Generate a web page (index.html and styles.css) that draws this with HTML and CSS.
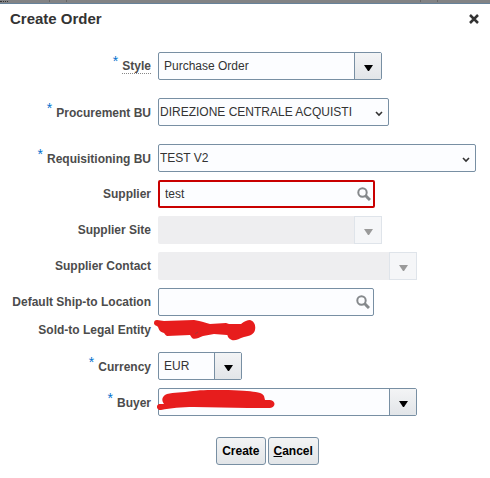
FILE: index.html
```html
<!DOCTYPE html>
<html lang="en">
<head>
<meta charset="utf-8">
<title>Create Order</title>
<link rel="stylesheet" href="styles.css">
</head>
<body>
<div class="backdrop"><span class="mark"></span><span class="tick"></span><span class="tick"></span><span class="spacer"></span><span class="tick"></span><span class="tick"></span></div>
<main class="dialog" role="dialog" aria-labelledby="title">
  <header class="header">
    <h1 id="title">Create Order</h1>
    <button class="close" type="button" aria-label="Close"><svg width="10" height="10" viewBox="0 0 10 10"><path d="M1 1L9 9M9 1L1 9"/></svg></button>
  </header>
  <form class="form">
    <div class="row row-spaced">
      <label class="label" for="style"><span class="required">*</span><span class="hint">Style</span></label>
      <div class="field medium"><input id="style" type="text" value="Purchase Order"><button class="arrow" type="button" aria-label="Open style list"><svg width="9" height="6" viewBox="0 0 9 6"><path d="M0 0H9L5 6H4Z"/></svg></button></div>
    </div>
    <div class="row row-spaced">
      <label class="label" for="procurement"><span class="required">*</span>Procurement BU</label>
      <div class="field procurement"><select id="procurement"><option>DIREZIONE CENTRALE ACQUISTI</option></select><svg class="chevron" width="8" height="6" viewBox="0 0 8 6"><path d="M1 1L4 4L7 1"/></svg></div>
    </div>
    <div class="row">
      <label class="label" for="requisitioning"><span class="required">*</span>Requisitioning BU</label>
      <div class="field wide"><select id="requisitioning"><option>TEST V2</option></select><svg class="chevron" width="8" height="6" viewBox="0 0 8 6"><path d="M1 1L4 4L7 1"/></svg></div>
    </div>
    <div class="row">
      <label class="label" for="supplier">Supplier</label>
      <div class="field search invalid"><input id="supplier" type="text" value="test"><button class="lens" type="button" aria-label="Search supplier"><svg width="14" height="14" viewBox="0 0 14 14"><circle cx="5.5" cy="5.5" r="4.2"/><path d="M8.5 8.5L13 13"/></svg></button></div>
    </div>
    <div class="row">
      <label class="label" for="site">Supplier Site</label>
      <div class="field medium disabled"><input id="site" type="text" disabled><button class="arrow" type="button" disabled aria-label="Open site list"><svg width="9" height="6" viewBox="0 0 9 6"><path d="M0 0H9L5 6H4Z"/></svg></button></div>
    </div>
    <div class="row">
      <label class="label" for="contact">Supplier Contact</label>
      <div class="field large disabled"><input id="contact" type="text" disabled><button class="arrow" type="button" disabled aria-label="Open contact list"><svg width="9" height="6" viewBox="0 0 9 6"><path d="M0 0H9L5 6H4Z"/></svg></button></div>
    </div>
    <div class="row">
      <label class="label" for="location">Default Ship-to Location</label>
      <div class="field search"><input id="location" type="text"><button class="lens" type="button" aria-label="Search location"><svg width="14" height="14" viewBox="0 0 14 14"><circle cx="5.5" cy="5.5" r="4.2"/><path d="M8.5 8.5L13 13"/></svg></button></div>
    </div>
    <div class="row row-text">
      <span class="label">Sold-to Legal Entity</span>
      <div class="value"><svg class="scribble scribble-entity" width="102" height="21" viewBox="0 0 102 21"><path d="M3 0L10 1L40 0C48 1 51 3 56 4L72 3L75 4L87 4C91 1 93 0 96 0C100 1 102 5 101 10C100 14 96 16 90 17C84 19 80 22 76 19C73 17 74 15 73 15L60 14L49 16C44 18 41 20 38 18L36 15L13 16C11 15 11 14 10 13C6 12 5 10 4 7C3 5 0 6 0 3C0 1 1 0 3 0Z"/><path class="scratch" d="M41 14L44 12"/></svg></div>
    </div>
    <div class="row">
      <label class="label" for="currency"><span class="required">*</span>Currency</label>
      <div class="field small"><input id="currency" type="text" value="EUR"><button class="arrow" type="button" aria-label="Open currency list"><svg width="9" height="6" viewBox="0 0 9 6"><path d="M0 0H9L5 6H4Z"/></svg></button></div>
    </div>
    <div class="row">
      <label class="label" for="buyer"><span class="required">*</span>Buyer</label>
      <div class="field large"><input id="buyer" type="text"><button class="arrow" type="button" aria-label="Open buyer list"><svg width="9" height="6" viewBox="0 0 9 6"><path d="M0 0H9L5 6H4Z"/></svg></button><svg class="scribble scribble-buyer" width="118" height="20" viewBox="0 0 118 20"><path d="M10 4C17 2 25 3 36 1C53 -1 79 0 90 1C99 2 105 2 107 6L108 10L113 10C119 11 119 17 113 18L91 18L37 17C24 17 14 18 4 20C-1 20 -1 15 2 14L7 14C4 10 5 6 10 4Z"/></svg></div>
    </div>
    <div class="actions"><button class="button" type="submit">Create</button><button class="button" type="button"><u>C</u>ancel</button></div>
  </form>
</main>
</body>
</html>
```

FILE: styles.css
```css
* { box-sizing: border-box; }

body {
  margin: 0;
  background: #fff;
  color: #333;
  font-family: "Liberation Sans", Arial, sans-serif;
  font-size: 12px;
}

.backdrop {
  display: flex;
  height: 4px;
  padding: 0 52px 0 0;
  background: #828385;
  border-bottom: 1px solid #66829a;
}

.mark { width: 8px; height: 2px; border-bottom: 1px dotted #333; }
.tick { width: 1px; height: 2px; margin-left: 16px; background: #666; }
.mark + .tick { margin-left: 41px; }
.spacer { flex: 1; }
.spacer + .tick { margin-left: 0; }

.header {
  display: flex;
  align-items: center;
  justify-content: space-between;
  height: 30px;
  padding: 0 10px;
}

h1 { margin: 0; font-size: 15px; line-height: 18px; }

button { font: inherit; cursor: pointer; }

.close { display: flex; padding: 1px; border: 0; background: none; }
.close path { stroke: #333; stroke-width: 2.5; }

.form {
  display: flex;
  flex-direction: column;
  gap: 8px;
  padding: 18px 14px 12px 0;
}

.row {
  display: grid;
  grid-template-columns: 151px minmax(0, 1fr);
  column-gap: 7px;
  align-items: center;
}

.row-spaced { margin-bottom: 10px; }
.row-text { height: 20px; align-items: start; }

.label {
  color: #4c4c4c;
  font-weight: bold;
  line-height: 14px;
  text-align: right;
  white-space: nowrap;
}

.row-text .label { line-height: 12px; }

.hint { display: inline-block; border-bottom: 1px dotted #888; }
.required { margin-right: 4px; color: #0572ce; font-size: 14px; font-weight: normal; vertical-align: 4px; line-height: 6px; }

.field {
  position: relative;
  display: flex;
  height: 28px;
  max-width: 100%;
  border: 1px solid #788fa3;
  border-radius: 2px;
  background: #fcfdff;
}

.small { width: 84px; }
.search { width: 216px; }
.medium { width: 224px; }
.procurement { width: 231px; }
.large { width: 259px; }
.wide { width: 318px; }

input, select {
  flex: 1;
  min-width: 0;
  margin: 0;
  padding: 0 5px;
  border: 0;
  outline: 0;
  background: transparent;
  color: #333;
  font: 12px "Liberation Sans", Arial, sans-serif;
}

select { padding: 0 20px 0 1px; appearance: none; }

.chevron { position: absolute; right: 5px; top: 12px; pointer-events: none; }
.chevron path { fill: none; stroke: #333; stroke-width: 1.6; }

.arrow {
  display: flex;
  align-items: center;
  justify-content: center;
  width: 27px;
  padding: 3px 0 0;
  border: 0;
  border-left: 1px solid #788fa3;
  background: linear-gradient(#f3f4f5, #e2e5e8);
}

.lens { display: flex; align-items: center; width: 17px; padding: 0; border: 0; background: none; }
.lens svg { fill: none; stroke: #85898c; stroke-width: 2; }
.lens path { stroke-width: 3; }

.invalid { width: 217px; border: 2px solid #c90000; }
.invalid .lens { width: 16px; }

.disabled { border: 0; background: #eeeef0; }
.disabled .arrow { width: 28px; border: 1px solid #dfe4ea; background: #f5f6f8; }
.disabled .arrow path { fill: #9a9a9a; }

.value { position: relative; }
.scribble { position: absolute; fill: #e71d1d; pointer-events: none; }
.scribble-entity { left: -4px; top: -4px; }
.scribble-buyer { left: -2px; top: 1px; }
.scratch { stroke: #a33; stroke-width: 1; }

.actions { display: flex; justify-content: center; gap: 2px; margin: 13px -14px 0 45px; }

.button {
  height: 28px;
  padding: 0 5px;
  border: 1px solid #788fa3;
  border-radius: 3px;
  background: linear-gradient(#f3f4f5, #e2e5e8);
  color: #000;
  font-weight: bold;
}
```
